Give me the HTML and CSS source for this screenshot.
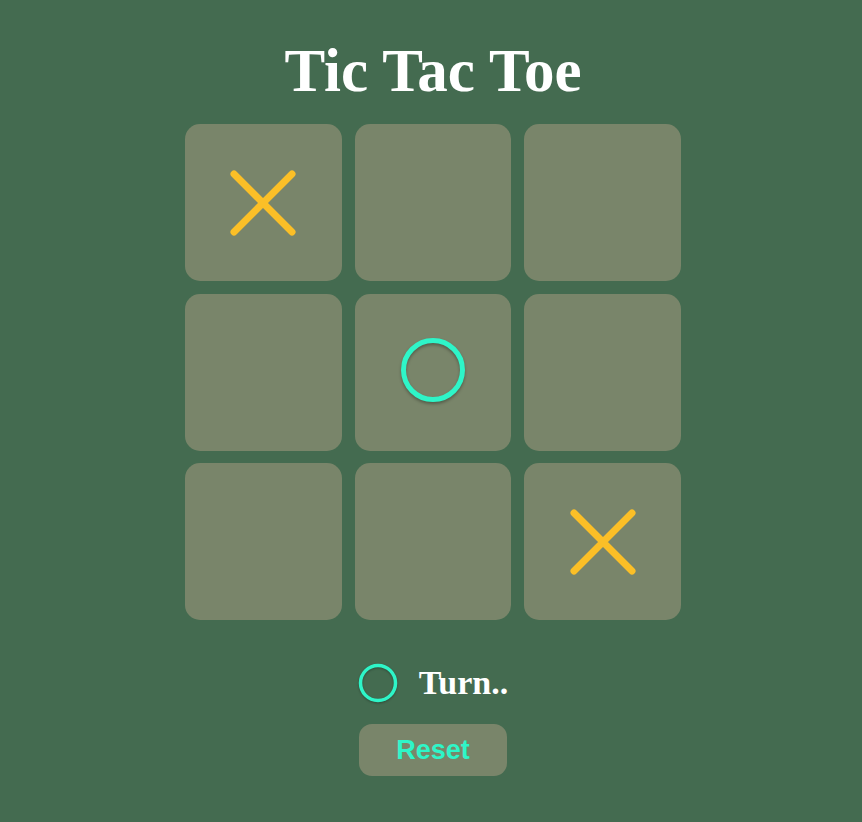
FILE: index.html
```html
<!DOCTYPE html>
<html lang="en">
<head>
<meta charset="utf-8">
<title>Tic Tac Toe</title>
<link rel="stylesheet" href="styles.css">
</head>
<body>
<main class="game">
  <h1 class="title">Tic Tac Toe</h1>
  <div class="board">
    <div class="cell">
      <svg class="mark-x" viewBox="0 0 66 66"><path d="M4 4 L62 62 M62 4 L4 62" /></svg>
    </div>
    <div class="cell"></div>
    <div class="cell"></div>
    <div class="cell"></div>
    <div class="cell">
      <svg class="mark-o" viewBox="0 0 66 66"><circle cx="33" cy="33" r="29.5" /></svg>
    </div>
    <div class="cell"></div>
    <div class="cell"></div>
    <div class="cell"></div>
    <div class="cell">
      <svg class="mark-x" viewBox="0 0 66 66"><path d="M4 4 L62 62 M62 4 L4 62" /></svg>
    </div>
  </div>
  <div class="turn">
    <svg class="turn-o" viewBox="0 0 40 40"><circle cx="20" cy="20" r="17.5" /></svg>
    <span class="turn-text">Turn..</span>
  </div>
  <button class="reset">Reset</button>
</main>
</body>
</html>
```

FILE: styles.css
```css
html, body {
  margin: 0;
  padding: 0;
}
body {
  background: #446b50;
  min-height: 822px;
}
.game {
  display: flex;
  flex-direction: column;
  align-items: center;
  padding-top: 36px;
  padding-left: 4px;
}
.title {
  margin: 0;
  font-family: "Liberation Serif", "Times New Roman", serif;
  font-weight: bold;
  font-size: 61px;
  line-height: 70px;
  color: #ffffff;
  height: 70px;
}
.board {
  margin-top: 18px;
  width: 496px;
  display: grid;
  grid-template-columns: repeat(3, 1fr);
  grid-template-rows: repeat(3, 157px);
  gap: 12.5px 13px;
}
.cell {
  background: #79856a;
  border-radius: 15px;
  display: flex;
  align-items: center;
  justify-content: center;
}
.mark-x {
  width: 66px;
  height: 66px;
}
.mark-x path {
  stroke: #fbbf27;
  stroke-width: 7;
  stroke-linecap: round;
  fill: none;
}
.mark-o {
  width: 66px;
  height: 66px;
  margin-bottom: 5px;
  filter: drop-shadow(0 2px 1.5px rgba(0, 0, 0, 0.3));
}
.mark-o circle {
  stroke: #2ef5c8;
  stroke-width: 5;
  fill: none;
}
.turn {
  margin-top: 43px;
  display: flex;
  align-items: center;
  gap: 21px;
  height: 40px;
}
.turn-o {
  width: 40px;
  height: 40px;
  filter: drop-shadow(0 1.5px 1px rgba(0, 0, 0, 0.3));
}
.turn-o circle {
  stroke: #2ef5c8;
  stroke-width: 3.5;
  fill: none;
}
.turn-text {
  font-family: "Liberation Serif", "Times New Roman", serif;
  font-weight: bold;
  font-size: 34px;
  color: #ffffff;
  line-height: 40px;
}
.reset {
  margin-top: 21px;
  width: 148px;
  height: 52px;
  border: none;
  border-radius: 13px;
  background: #79856a;
  color: #2ef5c8;
  font-family: "Liberation Sans", Arial, sans-serif;
  font-weight: bold;
  font-size: 27px;
  padding: 0;
  cursor: pointer;
}
```
